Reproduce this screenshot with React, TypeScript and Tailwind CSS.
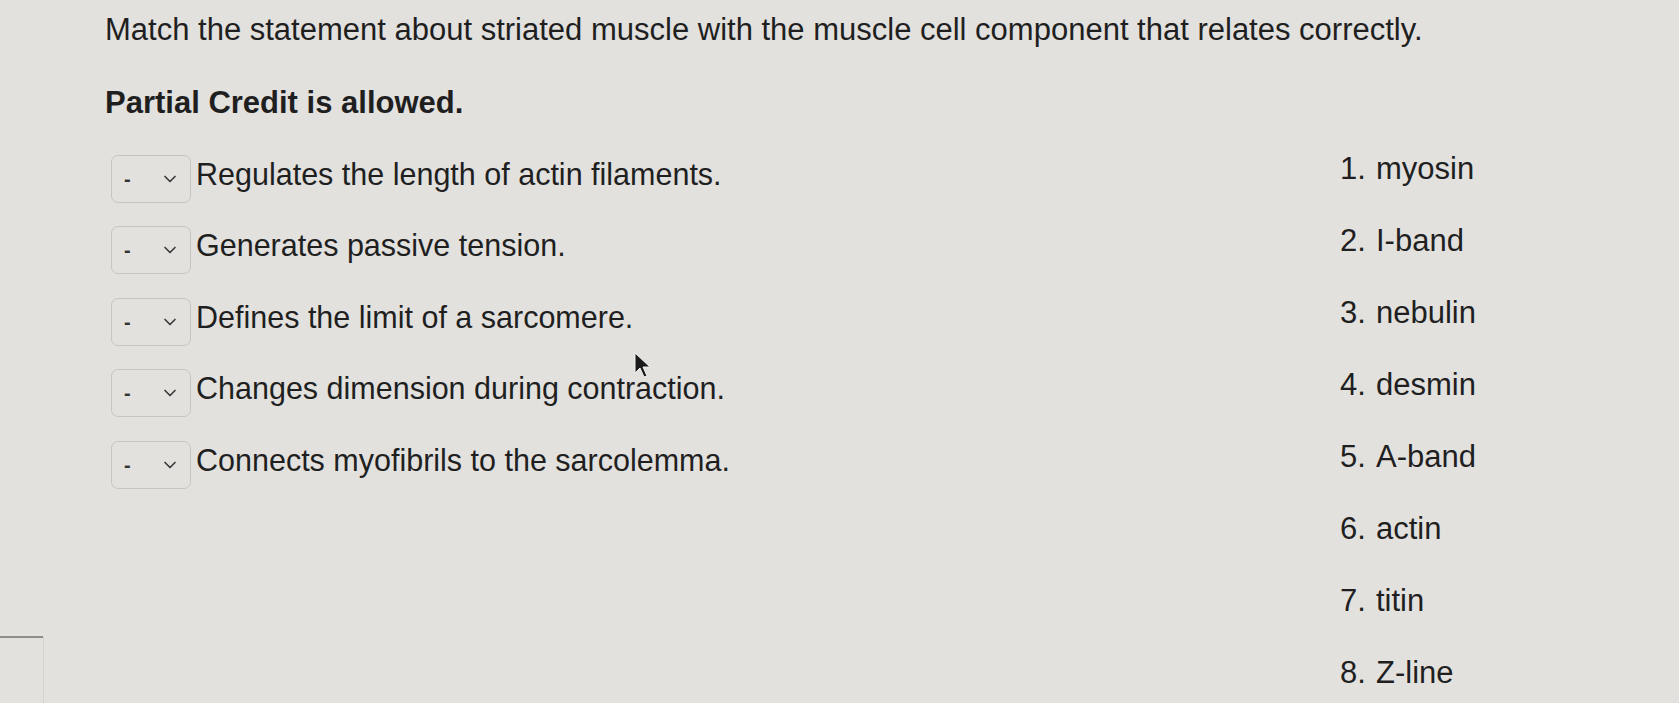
import { ChevronDown } from 'lucide-react';

const statements = [
  'Regulates the length of actin filaments.',
  'Generates passive tension.',
  'Defines the limit of a sarcomere.',
  'Changes dimension during contraction.',
  'Connects myofibrils to the sarcolemma.',
];

const choices = ['myosin', 'I-band', 'nebulin', 'desmin', 'A-band', 'actin', 'titin', 'Z-line'];

const MatchSelect = () => (
  <div className="mt-[10px] flex h-[48px] w-[80px] shrink-0 items-center justify-between rounded-[7px] border-[1.5px] border-[#c6c5c2] pl-[12px] pr-[10px]">
    <span className="text-[20px] leading-none font-bold text-[#333]">-</span>
    <ChevronDown className="h-[20px] w-[20px] text-[#3a3a3a]" strokeWidth={2} />
  </div>
);

const Pointer = () => (
  <svg
    className="pointer-events-none absolute left-[634px] top-[352px]"
    width="20"
    height="28"
    viewBox="0 0 20 28"
  >
    <path d="M1 1 L1 21 L6 16 L10 25 L13 24 L9 15 L16 15 Z" fill="#1b1b1b" stroke="#f2f2f2" strokeWidth="1" />
  </svg>
);

export default function App() {
  return (
    <div
      className="relative h-[703px] w-full overflow-hidden bg-[#e2e1de] text-[#1f1f1f]"
      style={{ fontFamily: '"Liberation Sans", Arial, sans-serif' }}
    >
      {/* left margin rule */}
      <div className="absolute left-0 top-[636px] h-[2px] w-[43px] bg-[#8d8d8b]" />
      <div className="absolute left-[43px] top-[637px] h-[70px] w-px bg-[#d3d2cf]" />

      <div className="pl-[105px] pt-[12px]">
        <h1 className="text-[31px] leading-[36px] font-normal">
          Match the statement about striated muscle with the muscle cell component that relates correctly.
        </h1>
        <p className="mt-[37px] text-[31px] leading-[36px] font-bold">Partial Credit is allowed.</p>

        <div className="mt-[17px] flex">
          <div className="flex w-[1235px] flex-col">
            {statements.map((s) => (
              <div key={s} className="flex h-[71.5px] items-center gap-[5px] pl-[6px]">
                <MatchSelect />
                <span className="text-[30.5px] leading-none">{s}</span>
              </div>
            ))}
          </div>

          <ol className="-mt-[6px] flex flex-col">
            {choices.map((c, i) => (
              <li key={c} className="flex h-[72px] items-center text-[31px] leading-none">
                <span className="w-[36px]">{i + 1}.</span>
                <span>{c}</span>
              </li>
            ))}
          </ol>
        </div>
      </div>

      <Pointer />
    </div>
  );
}
